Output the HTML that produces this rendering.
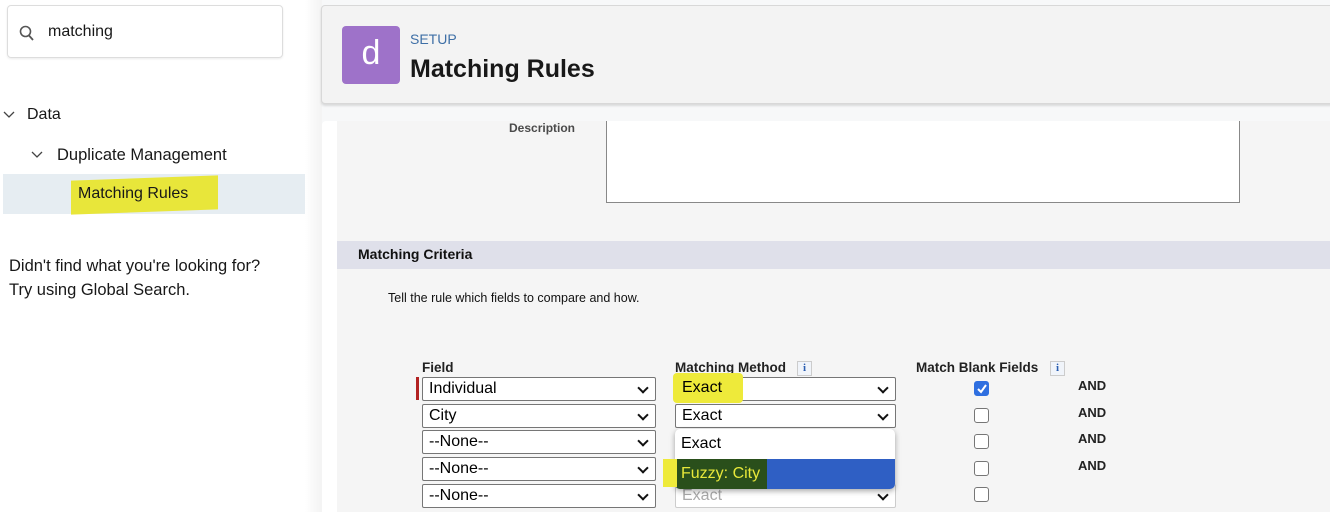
<!DOCTYPE html><html><head><style>
*{box-sizing:border-box;margin:0;padding:0}
body{width:1330px;height:512px;overflow:hidden;background:#f7f8f9;font-family:"Liberation Sans",Arial,sans-serif;position:relative}
.a{position:absolute}
.side{left:0;top:0;width:305px;height:512px;background:#fff}
.sel{height:24px;border:1px solid #767676;border-radius:2px;background:#fff;font-size:16px;padding:2px 6px;color:#000}
.sel:after{content:"";position:absolute;right:8px;top:6px;width:6px;height:6px;border-right:2px solid #111;border-bottom:2px solid #111;transform:rotate(45deg)}
.cb{width:15px;height:15px;border:1px solid #767676;border-radius:3px;background:#fff}
.and{font-size:13px;font-weight:bold;color:#222}
.lbl{font-size:13.5px;font-weight:bold;color:#222}
.info{width:15px;height:15px;border:1px solid #ccc;background:#f0f4fa;color:#2a5db0;font-size:11px;text-align:center;font-family:"Liberation Serif",serif;font-weight:bold;line-height:13px}
</style></head><body>
<div class="a side"></div>
<div class="a" style="left:7px;top:5px;width:276px;height:53px;border:1px solid #ddd;border-radius:4px;box-shadow:0 1px 2px rgba(0,0,0,.08)"></div>
<svg class="a" style="left:19px;top:25px" width="16" height="17" viewBox="0 0 16 17"><circle cx="6.5" cy="6.5" r="5" fill="none" stroke="#555" stroke-width="1.6"/><path d="M10 10.5 L14 15" stroke="#555" stroke-width="1.8"/></svg>
<div class="a" style="left:48px;top:23px;font-size:16px;color:#181818">matching</div>
<svg class="a" style="left:3px;top:110px" width="12" height="10"><path d="M1 2 L6 7 L11 2" fill="none" stroke="#444" stroke-width="1.3"/></svg>
<div class="a" style="left:27px;top:106px;font-size:16px;color:#181818">Data</div>
<svg class="a" style="left:31px;top:150px" width="12" height="10"><path d="M1 2 L6 7 L11 2" fill="none" stroke="#444" stroke-width="1.3"/></svg>
<div class="a" style="left:57px;top:146px;font-size:16.5px;color:#181818">Duplicate Management</div>
<div class="a" style="left:3px;top:174px;width:302px;height:40px;background:#e6edf2"></div>
<div class="a" style="left:71px;top:178px;width:147px;height:34px;background:#e8e63a;transform:skewY(-2deg)"></div>
<div class="a" style="left:78px;top:185px;font-size:16px;color:#181818">Matching Rules</div>
<div class="a" style="left:9px;top:254px;font-size:16.5px;color:#181818;line-height:24px">Didn't find what you're looking for?<br>Try using Global Search.</div>
<div class="a" style="left:305px;top:0;width:17px;height:512px;background:linear-gradient(90deg,#fff,#f3f3f3)"></div>
<div class="a" style="left:321px;top:5px;width:1020px;height:99px;background:#f3f3f3;border:1px solid #d8d8d8;border-radius:4px;box-shadow:0 2px 2px rgba(0,0,0,.12)"></div>
<div class="a" style="left:342px;top:26px;width:58px;height:58px;background:#9e72c9;border-radius:4px;color:#fff;font-size:34px;text-align:center;line-height:54px">d</div>
<div class="a" style="left:410px;top:31px;font-size:14px;color:#3e6fa6">SETUP</div>
<div class="a" style="left:410px;top:55px;font-size:25px;font-weight:bold;color:#181818">Matching Rules</div>
<div class="a" style="left:322px;top:121px;width:1008px;height:391px;background:#fff;border-radius:4px 0 0 0"></div>
<div class="a" style="left:337px;top:121px;width:993px;height:391px;background:#f5f5f5"></div>
<div class="a lbl" style="left:509px;top:121px;font-size:12px;color:#4a4a4a">Description</div>
<div class="a" style="left:606px;top:121px;width:634px;height:82px;background:#fff;border:1px solid #888;border-top:none"></div>
<div class="a" style="left:337px;top:241px;width:993px;height:28px;background:#dfe0ea"></div>
<div class="a" style="left:358px;top:246px;font-size:14px;font-weight:bold;color:#111">Matching Criteria</div>
<div class="a" style="left:388px;top:291px;font-size:12.5px;color:#111">Tell the rule which fields to compare and how.</div>
<div class="a lbl" style="left:422px;top:360px">Field</div>
<div class="a lbl" style="left:675px;top:360px">Matching Method</div>
<div class="a info" style="left:797px;top:361px">i</div>
<div class="a lbl" style="left:916px;top:360px">Match Blank Fields</div>
<div class="a info" style="left:1050px;top:361px">i</div>
<div class="a" style="left:416px;top:377px;width:3px;height:23px;background:#b22222"></div>
<div class="a sel" style="left:422px;top:377px;width:234px">Individual</div>
<div class="a sel" style="left:422px;top:404px;width:234px">City</div>
<div class="a sel" style="left:422px;top:430px;width:234px">--None--</div>
<div class="a sel" style="left:422px;top:457px;width:234px">--None--</div>
<div class="a sel" style="left:422px;top:484px;width:234px">--None--</div>
<div class="a sel" style="left:675px;top:377px;width:221px"></div>
<div class="a" style="left:673px;top:373px;width:70px;height:30px;background:#eeea3a;border-radius:4px"></div>
<div class="a" style="left:682px;top:379px;font-size:16px">Exact</div>
<div class="a sel" style="left:675px;top:404px;width:221px">Exact</div>
<div class="a sel" style="left:675px;top:484px;width:221px;color:#aaa;border-color:#ccc">Exact</div>
<div class="a" style="left:675px;top:429px;width:220px;height:60px;background:#fff;border-radius:5px;box-shadow:0 2px 6px rgba(0,0,0,.35);overflow:hidden">
<div style="height:30px;padding:6px 6px;font-size:16px">Exact</div>
<div style="height:30px;background:#2f5fc4;position:relative"><div style="position:absolute;left:0;top:0;width:92px;height:30px;background:#2a4f1b"></div><span style="position:relative;left:6px;top:6px;font-size:16px;color:#e8e83a">Fuzzy: City</span></div>
</div>
<div class="a" style="left:663px;top:459px;width:14px;height:28px;background:#eeea3a"></div>
<div class="a cb" style="left:974px;top:381px;background:#2f6fe0;border-color:#2f6fe0"></div>
<svg class="a" style="left:976px;top:383px" width="12" height="12"><path d="M2 6 L5 9 L10 2" fill="none" stroke="#fff" stroke-width="2"/></svg>
<div class="a cb" style="left:974px;top:408px"></div>
<div class="a cb" style="left:974px;top:434px"></div>
<div class="a cb" style="left:974px;top:461px"></div>
<div class="a cb" style="left:974px;top:487px"></div>
<div class="a and" style="left:1078px;top:378px">AND</div>
<div class="a and" style="left:1078px;top:405px">AND</div>
<div class="a and" style="left:1078px;top:431px">AND</div>
<div class="a and" style="left:1078px;top:458px">AND</div>
</body></html>
